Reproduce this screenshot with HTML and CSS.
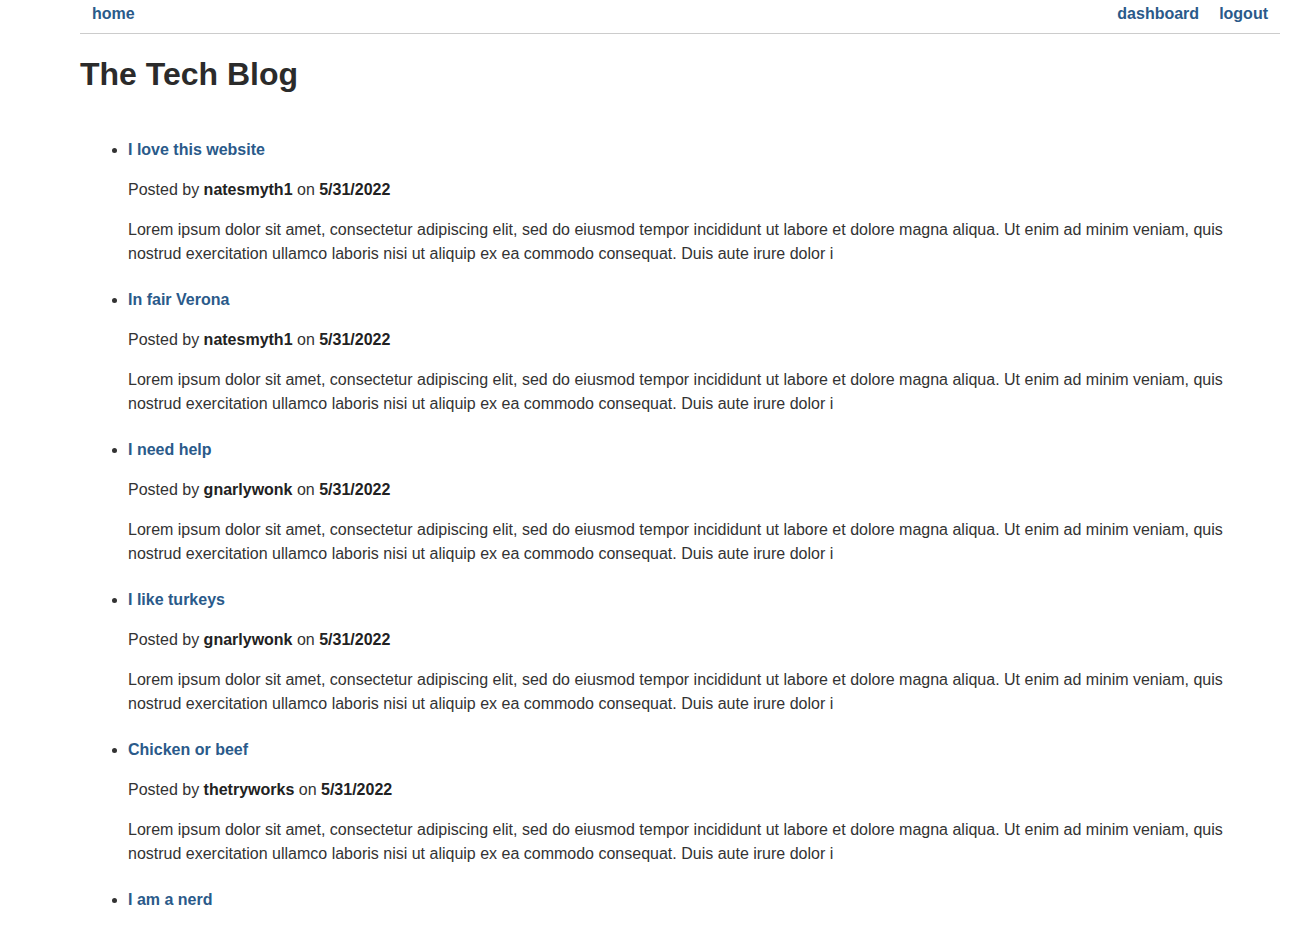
FILE: index.html
```html
<!DOCTYPE html>
<html lang="en">
<head>
<meta charset="utf-8">
<title>The Tech Blog</title>
<link rel="stylesheet" href="styles.css">
</head>
<body>
<div class="page">
  <nav class="nav">
    <a class="nav-link" href="#">home</a>
    <div class="nav-right">
      <a class="nav-link" href="#">dashboard</a>
      <a class="nav-link" href="#">logout</a>
    </div>
  </nav>
  <h1 class="site-title">The Tech Blog</h1>
  <ul class="posts">
    <li class="post">
      <a class="post-title" href="#">I love this website</a>
      <p class="meta">Posted by <strong>natesmyth1</strong> on <strong>5/31/2022</strong></p>
      <p class="body">Lorem ipsum dolor sit amet, consectetur adipiscing elit, sed do eiusmod tempor incididunt ut labore et dolore magna aliqua. Ut enim ad minim veniam, quis nostrud exercitation ullamco laboris nisi ut aliquip ex ea commodo consequat. Duis aute irure dolor i</p>
    </li>
    <li class="post">
      <a class="post-title" href="#">In fair Verona</a>
      <p class="meta">Posted by <strong>natesmyth1</strong> on <strong>5/31/2022</strong></p>
      <p class="body">Lorem ipsum dolor sit amet, consectetur adipiscing elit, sed do eiusmod tempor incididunt ut labore et dolore magna aliqua. Ut enim ad minim veniam, quis nostrud exercitation ullamco laboris nisi ut aliquip ex ea commodo consequat. Duis aute irure dolor i</p>
    </li>
    <li class="post">
      <a class="post-title" href="#">I need help</a>
      <p class="meta">Posted by <strong>gnarlywonk</strong> on <strong>5/31/2022</strong></p>
      <p class="body">Lorem ipsum dolor sit amet, consectetur adipiscing elit, sed do eiusmod tempor incididunt ut labore et dolore magna aliqua. Ut enim ad minim veniam, quis nostrud exercitation ullamco laboris nisi ut aliquip ex ea commodo consequat. Duis aute irure dolor i</p>
    </li>
    <li class="post">
      <a class="post-title" href="#">I like turkeys</a>
      <p class="meta">Posted by <strong>gnarlywonk</strong> on <strong>5/31/2022</strong></p>
      <p class="body">Lorem ipsum dolor sit amet, consectetur adipiscing elit, sed do eiusmod tempor incididunt ut labore et dolore magna aliqua. Ut enim ad minim veniam, quis nostrud exercitation ullamco laboris nisi ut aliquip ex ea commodo consequat. Duis aute irure dolor i</p>
    </li>
    <li class="post">
      <a class="post-title" href="#">Chicken or beef</a>
      <p class="meta">Posted by <strong>thetryworks</strong> on <strong>5/31/2022</strong></p>
      <p class="body">Lorem ipsum dolor sit amet, consectetur adipiscing elit, sed do eiusmod tempor incididunt ut labore et dolore magna aliqua. Ut enim ad minim veniam, quis nostrud exercitation ullamco laboris nisi ut aliquip ex ea commodo consequat. Duis aute irure dolor i</p>
    </li>
    <li class="post">
      <a class="post-title" href="#">I am a nerd</a>
      <p class="meta">Posted by <strong>natesmyth1</strong> on <strong>5/31/2022</strong></p>
      <p class="body">Lorem ipsum dolor sit amet, consectetur adipiscing elit, sed do eiusmod tempor incididunt ut labore et dolore magna aliqua. Ut enim ad minim veniam, quis nostrud exercitation ullamco laboris nisi ut aliquip ex ea commodo consequat. Duis aute irure dolor i</p>
    </li>
  </ul>
</div>
</body>
</html>
```
FILE: styles.css
```css
html, body {
  margin: 0;
  padding: 0;
  background: #ffffff;
}

body {
  font-family: "Liberation Sans", Arial, sans-serif;
  font-size: 16px;
  line-height: 24px;
  color: #333333;
}

.page {
  margin: 0 10px 0 80px;
}

.nav {
  display: flex;
  justify-content: space-between;
  align-items: flex-start;
  padding: 2px 2px 7px;
  border-bottom: 1px solid #cccccc;
}

.nav-right {
  display: flex;
}

.nav-link {
  display: block;
  padding: 0 10px;
  font-weight: bold;
  color: #2a5a8a;
  text-decoration: none;
}

.site-title {
  margin: 20px 0 0;
  font-size: 32px;
  line-height: 40px;
  font-weight: bold;
  color: #2b2b2b;
}

.posts {
  margin: 44px 0 0;
  padding: 0 0 0 48px;
  list-style: disc;
}

.post {
  margin-bottom: 22px;
}

.post::marker {
  color: #333333;
}

.post-title {
  font-weight: bold;
  color: #2a5a8a;
  text-decoration: none;
}

.meta,
.body {
  margin: 16px 0 0;
}

.meta strong {
  color: #222222;
}
```
